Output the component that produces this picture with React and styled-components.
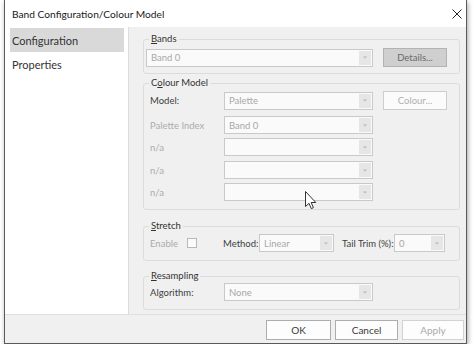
import React from 'react';
import styled, { createGlobalStyle } from 'styled-components';

const Global = createGlobalStyle`
  html, body { margin: 0; padding: 0; background: #ffffff; }
  body { font-family: Lato, "Noto Sans", sans-serif; }
  * { box-sizing: border-box; }
`;

const Window = styled.div`
  position: relative;
  margin-left: 4px;
  width: 463px;
  height: 344px;
  border: 1px solid #5a5a5a;
  border-top: none;
  box-shadow: 1px 2px 5px rgba(0, 0, 0, 0.35);
  display: flex;
  flex-direction: column;
  background: #f0f0f0;
`;

const TitleBar = styled.div`
  height: 27px;
  flex: none;
  background: #ffffff;
  display: flex;
  align-items: center;
  justify-content: space-between;
  padding: 0 4px 0 7px;
  font-size: 10.2px;
  color: #1a1a1a;
`;

const Close = styled.svg`
  width: 10px;
  height: 10px;
`;

const Body = styled.div`
  flex: 1;
  display: flex;
  min-height: 0;
`;

const Sidebar = styled.div`
  width: 124px;
  flex: none;
  background: #ffffff;
  border-right: 1px solid #dcdcdc;
  padding-top: 1px;
`;

const NavItem = styled.div`
  margin-left: 5px;
  width: 114px;
  height: 24px;
  padding-left: 2px;
  display: flex;
  align-items: center;
  font-size: 11px;
  color: #333;
  background: ${p => (p.$active ? '#d9d9d9' : 'transparent')};
`;

const Content = styled.div`
  flex: 1;
  padding: 6px 6px 0 14px;
  display: flex;
  flex-direction: column;
`;

const Group = styled.fieldset`
  margin: ${p => p.$mt || 0}px 0 0 0;
  padding: 0;
  border: 1px solid #dcdcdc;
  border-radius: 3px;
  min-width: 0;
`;

const Legend = styled.legend`
  margin-left: 5px;
  padding: 0 2px;
  font-size: 9.5px;
  line-height: 12px;
  color: #333;
`;

const GroupInner = styled.div`
  padding: ${p => p.$pad};
`;

const Row = styled.div`
  display: flex;
  align-items: center;
  height: ${p => p.$h || 18}px;
  margin-top: ${p => p.$mt || 0}px;
`;

const Label = styled.span`
  width: ${p => p.$w}px;
  flex: none;
  font-size: 9.5px;
  color: ${p => (p.$disabled ? '#ababab' : '#404040')};
  margin-left: ${p => p.$ml || 0}px;
  white-space: nowrap;
`;

const ComboBox = styled.div`
  width: ${p => p.$w}px;
  height: 18px;
  flex: none;
  border: 1px solid #c9c9c9;
  background: #fafafa;
  display: flex;
  align-items: center;
  padding: 1px 1px 1px 4px;
  font-size: 9.5px;
  color: #a8a8a8;
`;

const ComboText = styled.span`
  flex: 1;
  white-space: nowrap;
  overflow: hidden;
`;

const Arrow = styled.span`
  width: 12px;
  align-self: stretch;
  background: #e6e6e6;
  display: flex;
  align-items: center;
  justify-content: center;
`;

const Combo = ({ w, text }) => (
  <ComboBox $w={w}>
    <ComboText>{text}</ComboText>
    <Arrow>
      <svg width="4" height="3" viewBox="0 0 4 3">
        <path d="M0 0.5 L4 0.5 L2 2.5 Z" fill="#b8b8b8" />
      </svg>
    </Arrow>
  </ComboBox>
);

const SideButton = styled.div`
  width: 64px;
  height: 19px;
  flex: none;
  margin-left: 10px;
  display: flex;
  align-items: center;
  justify-content: center;
  font-size: 9.5px;
  border: 1px solid ${p => (p.$pressed ? '#b3b3b3' : '#cdcdcd')};
  background: ${p => (p.$pressed ? '#cfcfcf' : '#fbfbfb')};
  color: ${p => (p.$pressed ? '#6a6a6a' : '#b0b0b0')};
`;

const Check = styled.span`
  width: 10px;
  height: 10px;
  flex: none;
  border: 1px solid #b9b9b9;
  background: #fbfbfb;
`;

const Footer = styled.div`
  height: 29px;
  flex: none;
  border-top: 1px solid #dfdfdf;
  display: flex;
  justify-content: flex-end;
  align-items: flex-start;
  gap: 4px;
  padding: 5px 2px 0 0;
`;

const DlgButton = styled.div`
  width: ${p => p.$w}px;
  height: 20px;
  display: flex;
  align-items: center;
  justify-content: center;
  font-size: 10px;
  background: #fdfdfd;
  border: 1px solid ${p => (p.$disabled ? '#d2d2d2' : '#adadad')};
  color: ${p => (p.$disabled ? '#ababab' : '#3a3a3a')};
`;

const Cursor = styled.svg`
  position: absolute;
  left: 300px;
  top: 191px;
`;

export default function App() {
  return (
    <>
      <Global />
      <Window>
        <TitleBar>
          <span>Band Configuration/Colour Model</span>
          <Close viewBox="0 0 10 10">
            <path d="M0.5 0.5 L9.5 9.5 M9.5 0.5 L0.5 9.5" stroke="#222" strokeWidth="1" />
          </Close>
        </TitleBar>
        <Body>
          <Sidebar>
            <NavItem $active>Configuration</NavItem>
            <NavItem>Properties</NavItem>
          </Sidebar>
          <Content>
            <Group>
              <Legend><u>B</u>ands</Legend>
              <GroupInner $pad="3px 12px 6px 2px">
                <Row $h={19}>
                  <Combo w={227} text="Band 0" />
                  <SideButton $pressed>Details...</SideButton>
                </Row>
              </GroupInner>
            </Group>
            <Group $mt={3}>
              <Legend>C<u>o</u>lour Model</Legend>
              <GroupInner $pad="2px 12px 8px 6px">
                <Row $h={19}>
                  <Label $w={74}>Model:</Label>
                  <Combo w={149} text="Palette" />
                  <SideButton>Colour...</SideButton>
                </Row>
                <Row $mt={6}>
                  <Label $w={74} $disabled>Palette Index</Label>
                  <Combo w={149} text="Band 0" />
                </Row>
                <Row $mt={4}>
                  <Label $w={74} $disabled>n/a</Label>
                  <Combo w={149} text="" />
                </Row>
                <Row $mt={5}>
                  <Label $w={74} $disabled>n/a</Label>
                  <Combo w={149} text="" />
                </Row>
                <Row $mt={4}>
                  <Label $w={74} $disabled>n/a</Label>
                  <Combo w={149} text="" />
                </Row>
              </GroupInner>
            </Group>
            <Group $mt={10}>
              <Legend><u>S</u>tretch</Legend>
              <GroupInner $pad="2px 12px 8px 6px">
                <Row>
                  <Label $w={37} $disabled>Enable</Label>
                  <Check />
                  <Label $w={36} $ml={26}>Method:</Label>
                  <Combo w={75} text="Linear" />
                  <Label $w={52} $ml={8}>Tail Trim (%):</Label>
                  <Combo w={51} text="0" />
                </Row>
              </GroupInner>
            </Group>
            <Group $mt={9}>
              <Legend><u>R</u>esampling</Legend>
              <GroupInner $pad="1px 12px 8px 6px">
                <Row>
                  <Label $w={74}>Algorithm:</Label>
                  <Combo w={149} text="None" />
                </Row>
              </GroupInner>
            </Group>
          </Content>
        </Body>
        <Footer>
          <DlgButton $w={65}>OK</DlgButton>
          <DlgButton $w={63}>Cancel</DlgButton>
          <DlgButton $w={62} $disabled>Apply</DlgButton>
        </Footer>
        <Cursor width="12" height="19" viewBox="0 0 12 19">
          <path d="M0.5 0.5 L0.5 15.5 L4 12.3 L6.3 17.6 L8.4 16.7 L6.2 11.5 L10.8 11.5 Z" fill="#fff" stroke="#333" strokeWidth="1" strokeLinejoin="round" />
        </Cursor>
      </Window>
    </>
  );
}
